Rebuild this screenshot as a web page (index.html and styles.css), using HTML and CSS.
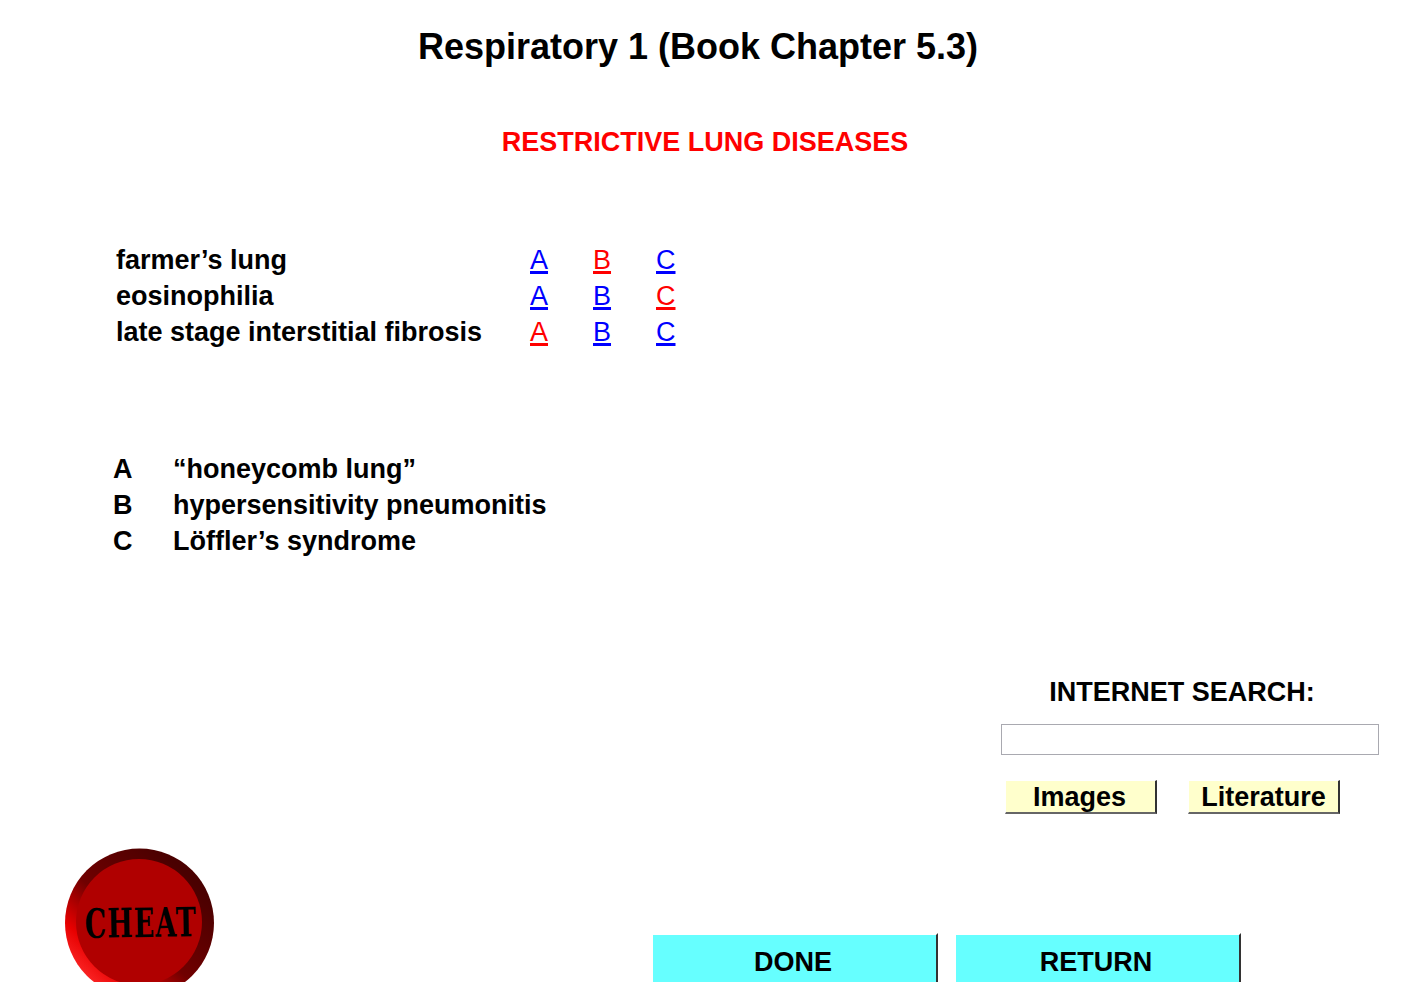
FILE: index.html
```html
<!DOCTYPE html>
<html lang="en">
<head>
  <meta charset="UTF-8">
  <title>Respiratory 1</title>
  <link rel="stylesheet" href="styles.css">
</head>
<body>

<h1 class="title">Respiratory 1 (Book Chapter 5.3)</h1>
<h2 class="subtitle">RESTRICTIVE LUNG DISEASES</h2>

<div class="question-grid">
  <div class="term">farmer’s lung</div>
  <a class="choice" href="#">A</a>
  <a class="choice correct" href="#">B</a>
  <a class="choice" href="#">C</a>

  <div class="term">eosinophilia</div>
  <a class="choice" href="#">A</a>
  <a class="choice" href="#">B</a>
  <a class="choice correct" href="#">C</a>

  <div class="term">late stage interstitial fibrosis</div>
  <a class="choice correct" href="#">A</a>
  <a class="choice" href="#">B</a>
  <a class="choice" href="#">C</a>
</div>

<div class="legend">
  <div>A</div><div>“honeycomb lung”</div>
  <div>B</div><div>hypersensitivity pneumonitis</div>
  <div>C</div><div>Löffler’s syndrome</div>
</div>

<div class="search">
  <div class="search-label">INTERNET SEARCH:</div>
  <input class="search-input" type="text">
  <div class="search-buttons">
    <button class="btn-search btn-images">Images</button>
    <button class="btn-search">Literature</button>
  </div>
</div>

<div class="bottom">
  <svg class="cheat" width="150" height="134" viewBox="0 0 150 134">
    <defs>
      <linearGradient id="rim" x1="0.1" y1="0.9" x2="0.8" y2="0.15">
        <stop offset="0" stop-color="#ff3030"/>
        <stop offset="0.22" stop-color="#e80000"/>
        <stop offset="0.5" stop-color="#700000"/>
        <stop offset="1" stop-color="#4a0000"/>
      </linearGradient>
    </defs>
    <circle cx="74.5" cy="75" r="74.5" fill="url(#rim)"/>
    <circle cx="74" cy="74" r="63" fill="#b00000"/>
    <text class="cheat-text" transform="translate(20 90) rotate(-1) scale(1 1.5)">CHEAT</text>
  </svg>
  <button class="btn-nav btn-done">DONE</button>
  <button class="btn-nav btn-return">RETURN</button>
</div>

</body>
</html>
```

FILE: styles.css
```css
html, body {
  height: 982px;
  overflow: hidden;
}
body {
  font-family: "Liberation Sans", Arial, sans-serif;
  font-weight: bold;
  font-size: 27px;
  line-height: 36px;
  margin: 0;
  padding: 0;
  background-color: #fff;
  color: #000;
}
.title {
  font-size: 36px;
  line-height: 42px;
  margin: 26px 0 0;
  padding-right: 20px;
  text-align: center;
}
.subtitle {
  font-size: 27px;
  line-height: 32px;
  margin: 58px 6px 0 0;
  text-align: center;
  color: #f00;
}
.question-grid {
  display: grid;
  grid-template-columns: 414px 63px 63px 63px;
  margin: 84px 0 0 116px;
}
.choice {
  font-weight: normal;
  color: #00f;
  text-decoration-thickness: 3px;
}
.choice.correct {
  color: #f00;
}
.legend {
  display: grid;
  grid-template-columns: 60px auto;
  margin: 101px 0 0 113px;
}
.search {
  width: 378px;
  margin: 115px 0 0 1001px;
}
.search-label {
  text-align: center;
  padding-right: 16px;
}
.search-input {
  display: block;
  box-sizing: border-box;
  width: 378px;
  height: 31px;
  margin-top: 14px;
  border: 1px solid #a9a9b0;
  background: #fff;
}
.search-buttons {
  display: flex;
  gap: 31px;
  margin: 25px 0 0 4px;
}
.btn-search {
  box-sizing: border-box;
  width: 152px;
  height: 34px;
  padding: 0;
  font: bold 27px/30px "Liberation Sans", Arial, sans-serif;
  background-color: #ffffcc;
  border-style: solid;
  border-width: 1px 2px 2px 1px;
  border-color: #fff #333 #666 #fff;
}
.btn-images {
  padding-right: 2px;
}
.bottom {
  display: flex;
  align-items: flex-start;
  margin: 34px 0 0 65px;
}
.cheat {
  flex: none;
}
.cheat-text {
  font-family: "DejaVu Serif", serif;
  font-size: 27px;
  letter-spacing: 1px;
  fill: #000;
}
.btn-nav {
  box-sizing: border-box;
  width: 285px;
  height: 60px;
  margin-top: 85px;
  padding: 0 3px 3px 0;
  font: bold 27px/36px "Liberation Sans", Arial, sans-serif;
  background-color: #66ffff;
  border-style: solid;
  border-width: 2px 2px 2px 0;
  border-color: #fff #333 #666 #fff;
}
.btn-done {
  margin-left: 438px;
}
.btn-return {
  margin-left: 18px;
}
```
